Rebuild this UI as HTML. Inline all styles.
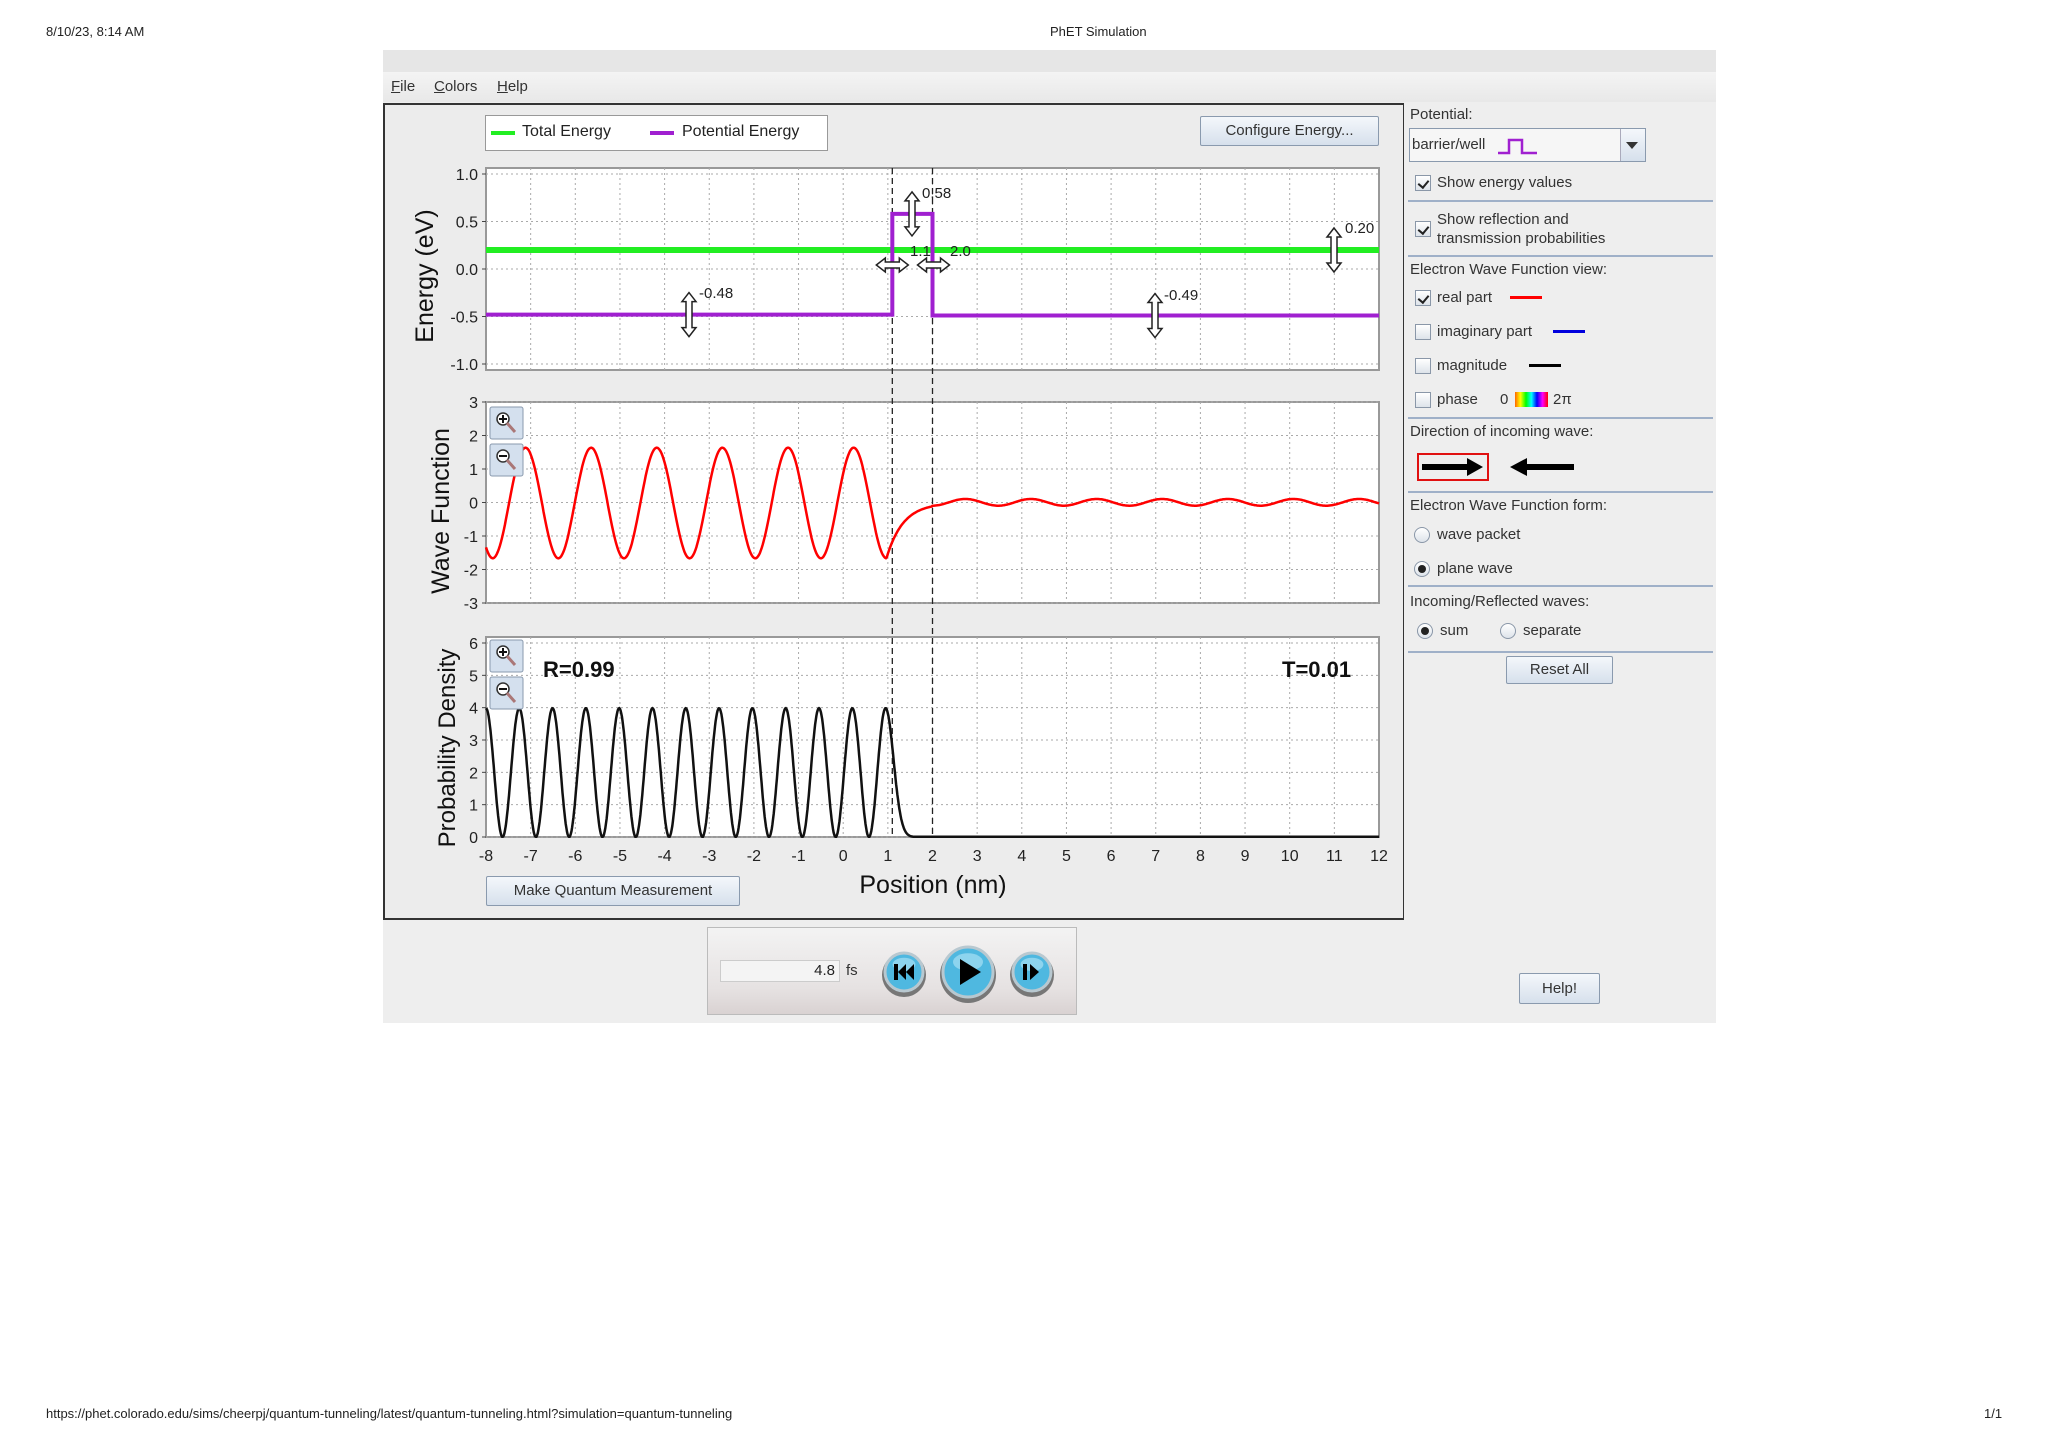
<!DOCTYPE html>
<html><head><meta charset="utf-8"><style>
*{margin:0;padding:0;box-sizing:border-box}
body{width:2048px;height:1448px;background:#fff;position:relative;overflow:hidden;font-family:"Liberation Sans",sans-serif;color:#222}
.a{position:absolute;white-space:nowrap}
.t{font-size:15px;color:#333}
.btn{position:absolute;border:1px solid #8a9aae;background:linear-gradient(#f4f7fb,#d6e0ec);font-size:15px;color:#333;text-align:center;border-radius:2px}
.cb{position:absolute;width:16px;height:16px;border:1px solid #8a97a8;background:linear-gradient(#fff,#dde3ea)}
.cb.on::after{content:"";position:absolute;left:4px;top:2px;width:5px;height:8px;border:solid #222;border-width:0 2px 2px 0;transform:rotate(40deg)}
.rb{position:absolute;width:16px;height:16px;border:1px solid #8a97a8;border-radius:50%;background:linear-gradient(#fff,#dde3ea)}
.rb.on::after{content:"";position:absolute;left:3px;top:3px;width:8px;height:8px;border-radius:50%;background:#222}
.sep{position:absolute;left:1408px;width:305px;height:2px;background:#9fb0c8}
</style></head><body>
<div class="a" style="left:46px;top:24px;font-size:13px">8/10/23, 8:14 AM</div>
<div class="a" style="left:1050px;top:24px;font-size:13px">PhET Simulation</div>
<div class="a" style="left:46px;top:1406px;font-size:13px">https://phet.colorado.edu/sims/cheerpj/quantum-tunneling/latest/quantum-tunneling.html?simulation=quantum-tunneling</div>
<div class="a" style="left:1984px;top:1406px;font-size:13px">1/1</div>

<div class="a" style="left:383px;top:50px;width:1333px;height:973px;background:#eeeeee"></div>
<div class="a" style="left:383px;top:50px;width:1333px;height:22px;background:#e6e6e6"></div>
<div class="a" style="left:383px;top:72px;width:1333px;height:30px;background:linear-gradient(#f4f4f4,#e8e8e8)"></div>
<div class="a t" style="left:391px;top:78px"><u>F</u>ile</div>
<div class="a t" style="left:434px;top:78px"><u>C</u>olors</div>
<div class="a t" style="left:497px;top:78px"><u>H</u>elp</div>
<div class="a" style="left:383px;top:103px;width:1021px;height:817px;border:2px solid #333;border-right-width:1px;background:#ececec"></div>
<div class="a" style="left:707px;top:927px;width:370px;height:88px;border:1px solid #bbb;background:linear-gradient(#f3f3f3,#e6e2e2 70%,#d9d2d2)"></div>

<svg class="a" style="left:0;top:0" width="2048" height="1448" id="s" font-family="Liberation Sans, sans-serif"></svg>

<div class="a" style="left:485px;top:115px;width:343px;height:36px;background:#fff;border:1px solid #999"></div>
<div class="a" style="left:491px;top:131px;width:24px;height:4px;background:#22ee22"></div>
<div class="a" style="left:522px;top:123px;font-size:16px">Total Energy</div>
<div class="a" style="left:650px;top:131px;width:24px;height:4px;background:#a020d0"></div>
<div class="a" style="left:682px;top:123px;font-size:16px">Potential Energy</div>
<div class="btn" style="left:1200px;top:116px;width:179px;height:30px;line-height:28px">Configure Energy...</div>
<div class="btn" style="left:486px;top:876px;width:254px;height:30px;line-height:28px">Make Quantum Measurement</div>

<div class="a" style="left:720px;top:960px;width:120px;height:22px;background:#f4f4f4;border:1px solid #ccc;text-align:right;padding-right:4px;font-size:15px;line-height:20px">4.8</div>
<div class="a t" style="left:846px;top:962px">fs</div>

<!-- right panel -->
<div class="a t" style="left:1410px;top:106px">Potential:</div>
<div class="a" style="left:1409px;top:128px;width:237px;height:34px;border:1px solid #8a9aae;background:#f6f6f6"></div>
<div class="a" style="left:1620px;top:129px;width:25px;height:32px;border-left:1px solid #aab;background:linear-gradient(#f4f7fb,#d6e0ec)"></div>
<div class="a" style="left:1626px;top:142px;border:6px solid transparent;border-top:7px solid #333;width:0;height:0"></div>
<div class="a t" style="left:1412px;top:136px">barrier/well</div>
<svg class="a" style="left:1497px;top:136px" width="42" height="20"><path d="M1 17H12V4H25V17H40" fill="none" stroke="#a020d0" stroke-width="2.5"/></svg>
<div class="cb on" style="left:1415px;top:175px"></div><div class="a t" style="left:1437px;top:174px">Show energy values</div>
<div class="sep" style="top:200px"></div>
<div class="cb on" style="left:1415px;top:221px"></div><div class="a t" style="left:1437px;top:210px;line-height:19px">Show reflection and<br>transmission probabilities</div>
<div class="sep" style="top:255px"></div>
<div class="a t" style="left:1410px;top:261px">Electron Wave Function view:</div>
<div class="cb on" style="left:1415px;top:290px"></div><div class="a t" style="left:1437px;top:289px">real part</div>
<div class="a" style="left:1510px;top:296px;width:32px;height:3px;background:#f00"></div>
<div class="cb" style="left:1415px;top:324px"></div><div class="a t" style="left:1437px;top:323px">imaginary part</div>
<div class="a" style="left:1553px;top:330px;width:32px;height:3px;background:#00d"></div>
<div class="cb" style="left:1415px;top:358px"></div><div class="a t" style="left:1437px;top:357px">magnitude</div>
<div class="a" style="left:1529px;top:364px;width:32px;height:3px;background:#000"></div>
<div class="cb" style="left:1415px;top:392px"></div><div class="a t" style="left:1437px;top:391px">phase</div>
<div class="a t" style="left:1500px;top:391px">0</div>
<div class="a" style="left:1515px;top:392px;width:33px;height:15px;background:linear-gradient(90deg,#f60,#ff0,#0f0,#0ff,#00f,#f0f,#f00)"></div>
<div class="a t" style="left:1553px;top:391px">2π</div>
<div class="sep" style="top:417px"></div>
<div class="a t" style="left:1410px;top:423px">Direction of incoming wave:</div>
<div class="a" style="left:1417px;top:453px;width:72px;height:28px;border:2px solid #e01010"></div>
<svg class="a" style="left:1417px;top:453px" width="170" height="28"><path d="M5 11H50V5L66 14L50 23V17H5Z"/><path d="M157 11H110V5L93 14L110 23V17H157Z"/></svg>
<div class="sep" style="top:491px"></div>
<div class="a t" style="left:1410px;top:497px">Electron Wave Function form:</div>
<div class="rb" style="left:1414px;top:527px"></div><div class="a t" style="left:1437px;top:526px">wave packet</div>
<div class="rb on" style="left:1414px;top:561px"></div><div class="a t" style="left:1437px;top:560px">plane wave</div>
<div class="sep" style="top:585px"></div>
<div class="a t" style="left:1410px;top:593px">Incoming/Reflected waves:</div>
<div class="rb on" style="left:1417px;top:623px"></div><div class="a t" style="left:1440px;top:622px">sum</div>
<div class="rb" style="left:1500px;top:623px"></div><div class="a t" style="left:1523px;top:622px">separate</div>
<div class="sep" style="top:651px"></div>
<div class="btn" style="left:1506px;top:656px;width:107px;height:28px;line-height:26px">Reset All</div>
<div class="btn" style="left:1519px;top:973px;width:81px;height:31px;line-height:29px">Help!</div>

<script>
const s=document.getElementById('s');let h='';
const X0=486,X1=1379,U=(X1-X0)/20;const px=x=>X0+(x+8)*U;
function plot(t,b,ymin,ymax,step,fmt,it,ib){
 h+=`<rect x="${X0}" y="${t}" width="${X1-X0}" height="${b-t}" fill="#fff" stroke="#999" stroke-width="2"/>`;
 for(let i=-7;i<12;i++)h+=`<line x1="${px(i)}" y1="${t}" x2="${px(i)}" y2="${b}" stroke="#aaa" stroke-dasharray="2,3"/>`;
 for(let v=ymin;v<=ymax+1e-9;v+=step){const y=b-ib-(v-ymin)/(ymax-ymin)*(b-t-it-ib);
  h+=`<line x1="${X0}" y1="${y}" x2="${X1}" y2="${y}" stroke="#aaa" stroke-dasharray="2,3"/>`;
  h+=`<text x="${X0-8}" y="${y+6}" font-size="16" text-anchor="end" fill="#222">${fmt(v)}</text><line x1="${X0-4}" y1="${y}" x2="${X0}" y2="${y}" stroke="#444"/>`;}
}
plot(168,370,-1,1,0.5,v=>v.toFixed(1).replace('-0.0','0.0'),6,6);
plot(402,603,-3,3,1,v=>Math.round(v),0,0);
plot(637,837,0,6,1,v=>Math.round(v),6,0);
[1.1,2.0].forEach(x=>h+=`<line x1="${px(x)}" y1="168" x2="${px(x)}" y2="837" stroke="#222" stroke-dasharray="6,4" stroke-width="1.3"/>`);
const ey=e=>269-e*95;
h+=`<line x1="${X0}" y1="${ey(0.2)}" x2="${X1}" y2="${ey(0.2)}" stroke="#22ee22" stroke-width="6"/>`;
h+=`<path d="M${X0} ${ey(-0.48)}H${px(1.1)}V${ey(0.58)}H${px(2)}V${ey(-0.49)}H${X1}" fill="none" stroke="#a020d0" stroke-width="4"/>`;
function va(x,y){return `<path d="M${x} ${y-22}l-7 9h4v26h-4l7 9l7-9h-4v-26h4z" fill="#fff" stroke="#222" stroke-width="1.5"/>`}
function ha(x,y){return `<path d="M${x-16} ${y}l9-7v4h14v-4l9 7l-9 7v-4h-14v4z" fill="#fff" stroke="#222" stroke-width="1.5"/>`}
h+=va(689,ey(-0.48))+va(1155,ey(-0.49))+va(912,ey(0.58))+va(1334,ey(0.2));
h+=ha(px(1.1),265)+ha(px(2)+1,265);
const lb=(x,y,t)=>h+=`<text x="${x}" y="${y}" font-size="15" fill="#222">${t}</text>`;
lb(699,298,'-0.48');lb(1164,300,'-0.49');lb(922,198,'0.58');lb(1345,233,'0.20');lb(910,256,'1.1');lb(950,256,'2.0');
const k=2*Math.PI/1.47;const wy=v=>503-v*33.5;
let d='';for(let i=0;i<=900;i++){const x=-8+i*20/900;let v;
 if(x<0.97)v=-1.65*Math.cos(k*(x-0.97));else if(x<2)v=-1.65*Math.exp(-2.72*(x-0.97));else v=-0.1*Math.cos(k*(x-2))+0.02;
 d+=(i?'L':'M')+px(x).toFixed(1)+' '+wy(v).toFixed(1);}
h+=`<path d="${d}" fill="none" stroke="#f00" stroke-width="2.5"/>`;
const py=v=>837-v*32.2;const kp=Math.PI/0.746;
d='';for(let i=0;i<=1400;i++){const x=-8+i*20/1400;let v;
 if(x<0.95)v=4*Math.cos(kp*(x-0.95))**2;else v=4*Math.exp(-16*(x-0.95)**2);
 v=Math.max(v,0.01);
 d+=(i?'L':'M')+px(x).toFixed(1)+' '+py(v).toFixed(1);}
h+=`<path d="${d}" fill="none" stroke="#111" stroke-width="2.5"/>`;
for(let i=-8;i<=12;i++)h+=`<text x="${px(i)}" y="861" font-size="16" text-anchor="middle" fill="#222">${i}</text>`;
h+=`<text x="933" y="893" font-size="25" text-anchor="middle" fill="#111">Position (nm)</text>`;
h+=`<text transform="translate(433,276) rotate(-90)" font-size="25" text-anchor="middle" fill="#111">Energy (eV)</text>`;
h+=`<text transform="translate(449,511) rotate(-90)" font-size="25" text-anchor="middle" fill="#111">Wave Function</text>`;
h+=`<text transform="translate(455,748) rotate(-90)" font-size="24" text-anchor="middle" fill="#111">Probability Density</text>`;
h+=`<text x="543" y="677" font-size="22" font-weight="bold" fill="#111">R=0.99</text><text x="1282" y="677" font-size="22" font-weight="bold" fill="#111">T=0.01</text>`;
function zb(y,plus){h+=`<rect x="490" y="${y}" width="33" height="32" rx="2" fill="#d4e0ee" stroke="#8a9aae"/><circle cx="503" cy="${y+12}" r="6" fill="#fff" stroke="#333" stroke-width="1.5"/><line x1="507" y1="${y+16}" x2="515" y2="${y+25}" stroke="#a77" stroke-width="3"/><line x1="499" y1="${y+12}" x2="507" y2="${y+12}" stroke="#111" stroke-width="2"/>`+(plus?`<line x1="503" y1="${y+8}" x2="503" y2="${y+16}" stroke="#111" stroke-width="2"/>`:'');}
zb(407,1);zb(444,0);zb(640,1);zb(677,0);
function cbtn(cx,r,icon){h+=`<circle cx="${cx}" cy="975" r="${r+3}" fill="#777"/><circle cx="${cx}" cy="972" r="${r}" fill="#4fb8e0" stroke="#b8c8d0" stroke-width="3"/><ellipse cx="${cx}" cy="${972-r*0.4}" rx="${r*0.6}" ry="${r*0.35}" fill="#a8e0f4" opacity=".7"/>`+icon;}
cbtn(904,19,`<rect x="894" y="964" width="4" height="16"/><path d="M906 964v16l-8-8zM914 964v16l-8-8z"/>`);
cbtn(968,25,`<path d="M960 959v26l21-13z"/>`);
cbtn(1032,19,`<rect x="1023" y="964" width="4" height="16"/><path d="M1030 964v16l9-8z"/>`);
s.innerHTML=h;
</script>
</body></html>
